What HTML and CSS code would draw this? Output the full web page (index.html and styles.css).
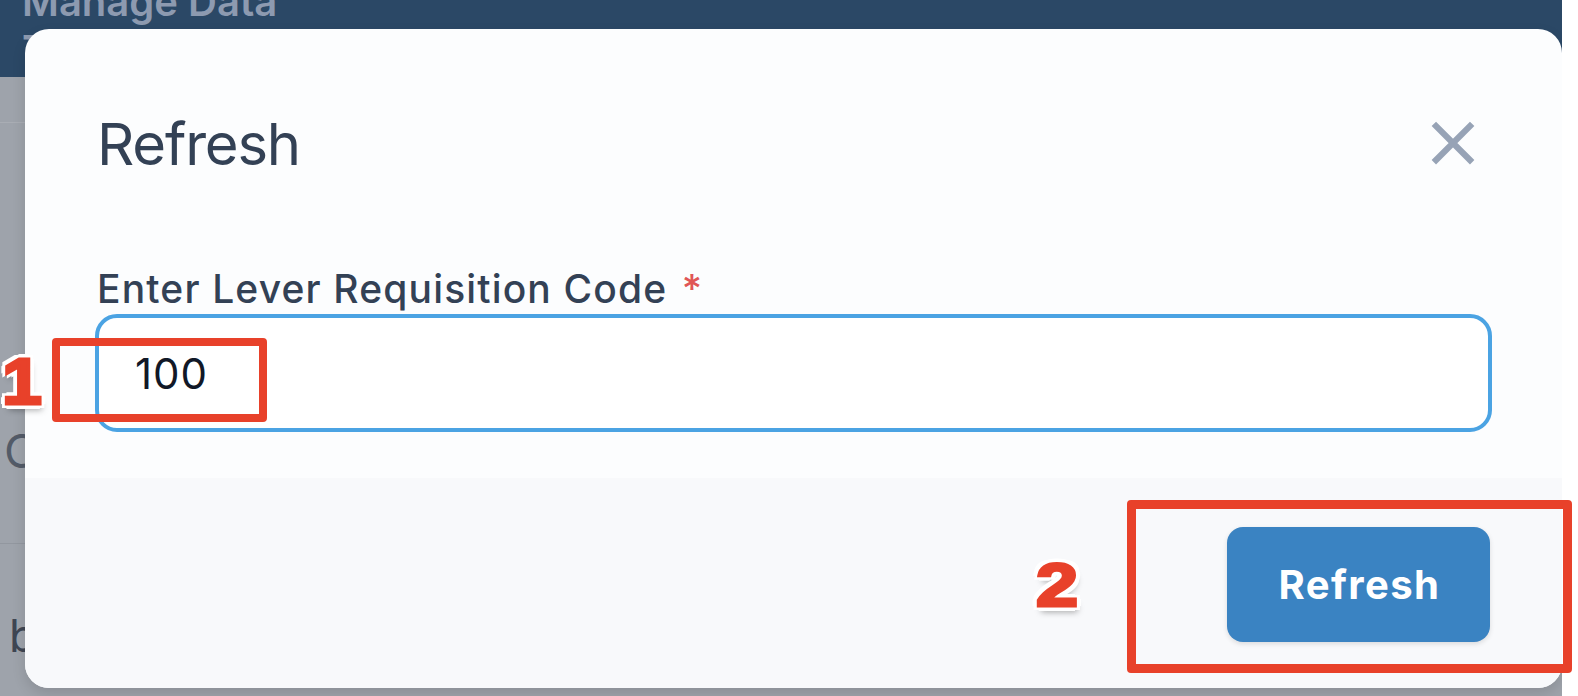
FILE: index.html
```html
<!DOCTYPE html>
<html lang="en">
<head>
<meta charset="utf-8">
<title>Refresh</title>
<link rel="stylesheet" href="styles.css">
</head>
<body>
<div class="shot">
  <div class="page">
    <div class="topbar">
      <div class="topbar-title">Manage Data<br>Tables</div>
    </div>
    <div class="bg-row bg-row-top"></div>
    <div class="bg-row bg-row-mid"><span class="bg-letter">C</span></div>
    <div class="bg-row bg-row-low"><span class="bg-letter bg-letter-b">b</span></div>

    <div class="modal">
      <div class="modal-header">
        <h2 class="modal-title">Refresh</h2>
        <button class="close-btn" aria-label="Close">
          <svg viewBox="0 0 48 48" width="48" height="46">
            <path d="M4 3 L44 43 M44 3 L4 43" stroke="#97a3b6" stroke-width="6.5" stroke-linecap="butt" fill="none"/>
          </svg>
        </button>
      </div>
      <div class="modal-body">
        <label class="field-label">Enter Lever Requisition Code <span class="req">*</span></label>
        <div class="field-input">100</div>
      </div>
      <div class="modal-footer">
        <button class="primary-btn">Refresh</button>
      </div>
    </div>
  </div>

  <div class="mark-box mark-box-1"></div>
  <div class="mark-box mark-box-2"></div>
  <span class="mark-num mark-num-1">1</span>
  <span class="mark-num mark-num-2">2</span>
</div>
</body>
</html>
```

FILE: styles.css
```css
html, body {
  margin: 0;
  padding: 0;
}
body {
  width: 1578px;
  height: 696px;
  overflow: hidden;
  background: #ffffff;
  font-family: Inter, "Noto Sans", "Liberation Sans", sans-serif;
}
.shot {
  position: relative;
  width: 1578px;
  height: 696px;
}
.page {
  position: relative;
  width: 1562px;
  height: 696px;
  overflow: hidden;
  background: #9ea3ab;
}
.topbar {
  height: 77px;
  background: #2b4866;
  padding-left: 22px;
  overflow: hidden;
  box-sizing: border-box;
}
.topbar-title {
  margin-top: -22px;
  font-size: 40px;
  line-height: 48px;
  font-weight: 600;
  color: #8d9ab0;
}
.bg-row {
  box-sizing: border-box;
  border-bottom: 1px solid #92979f;
}
.bg-row-top {
  height: 46px;
  border-bottom-color: #a9adb4;
}
.bg-row-mid {
  height: 421px;
  display: flex;
  align-items: flex-end;
  padding: 0 0 69px 4px;
}
.bg-row-low {
  height: 152px;
  border-bottom: none;
  padding: 69px 0 0 9px;
}
.bg-letter {
  display: block;
  font-size: 47px;
  line-height: 47px;
  color: #535b68;
}
.bg-letter-b {
  font-size: 45px;
  line-height: 45px;
  color: #3f4653;
}

.modal {
  position: absolute;
  left: 25px;
  top: 29px;
  width: 1537px;
  height: 659px;
  border-radius: 24px;
  background: #fcfdfe;
  overflow: hidden;
  display: flex;
  flex-direction: column;
  box-shadow: 0 6px 14px rgba(0, 0, 0, 0.12);
}
.modal-header {
  display: flex;
  justify-content: space-between;
  align-items: center;
  padding: 86px 85px 0 72px;
}
.modal-title {
  margin: 0;
  font-size: 58px;
  line-height: 58px;
  font-weight: 400;
  letter-spacing: -1.2px;
  color: #334155;
}
.close-btn {
  border: none;
  background: none;
  padding: 0;
  width: 48px;
  height: 46px;
  display: block;
}
.close-btn svg {
  display: block;
}
.modal-body {
  flex: 1;
  padding: 96px 70px 0 70px;
  display: flex;
  flex-direction: column;
}
.field-label {
  display: block;
  font-size: 39px;
  line-height: 39px;
  font-weight: 500;
  letter-spacing: 1.15px;
  color: #334155;
  padding-left: 2px;
  margin-bottom: 6px;
}
.req {
  color: #e05656;
  margin-left: 3px;
}
.field-input {
  box-sizing: border-box;
  height: 118px;
  border: 4px solid #4ba3e3;
  border-radius: 22px;
  background: #ffffff;
  padding-left: 36px;
  display: flex;
  align-items: center;
  font-size: 42px;
  letter-spacing: 1px;
  color: #111827;
}
.modal-footer {
  height: 210px;
  flex: none;
  box-sizing: border-box;
  background: #f8f9fb;
  display: flex;
  justify-content: flex-end;
  align-items: flex-start;
  padding: 49px 72px 0 0;
}
.primary-btn {
  width: 263px;
  height: 115px;
  border: none;
  border-radius: 16px;
  background: #3a83c2;
  color: #ffffff;
  font-family: Inter, "Noto Sans", "Liberation Sans", sans-serif;
  font-size: 40px;
  font-weight: 700;
  letter-spacing: 1.4px;
  padding: 0 0 0 2px;
  box-shadow: 0 2px 5px rgba(0, 0, 0, 0.12);
}

.mark-box {
  position: absolute;
  box-sizing: border-box;
  border: 8px solid #e8412a;
  border-radius: 4px;
}
.mark-box-1 {
  left: 52px;
  top: 338px;
  width: 215px;
  height: 84px;
}
.mark-box-2 {
  left: 1127px;
  top: 500px;
  width: 445px;
  height: 173px;
  border-width: 9px;
}
.mark-num {
  position: absolute;
  font-family: "Liberation Sans", Arial, sans-serif;
  font-weight: 700;
  color: #e8412a;
  line-height: 1;
  transform-origin: left top;
  -webkit-text-stroke: 3px #e8412a;
  text-shadow:
    5px 0 0 #fff, -5px 0 0 #fff, 0 5px 0 #fff, 0 -5px 0 #fff,
    4px 4px 0 #fff, -4px 4px 0 #fff, 4px -4px 0 #fff, -4px -4px 0 #fff,
    2px 6px 6px rgba(0, 0, 0, 0.35);
}
.mark-num-1 {
  left: 2px;
  top: 350px;
  font-size: 64px;
  transform: scaleX(1.12);
}
.mark-num-2 {
  left: 1036px;
  top: 554px;
  font-size: 62px;
  transform: scaleX(1.22);
}
```
